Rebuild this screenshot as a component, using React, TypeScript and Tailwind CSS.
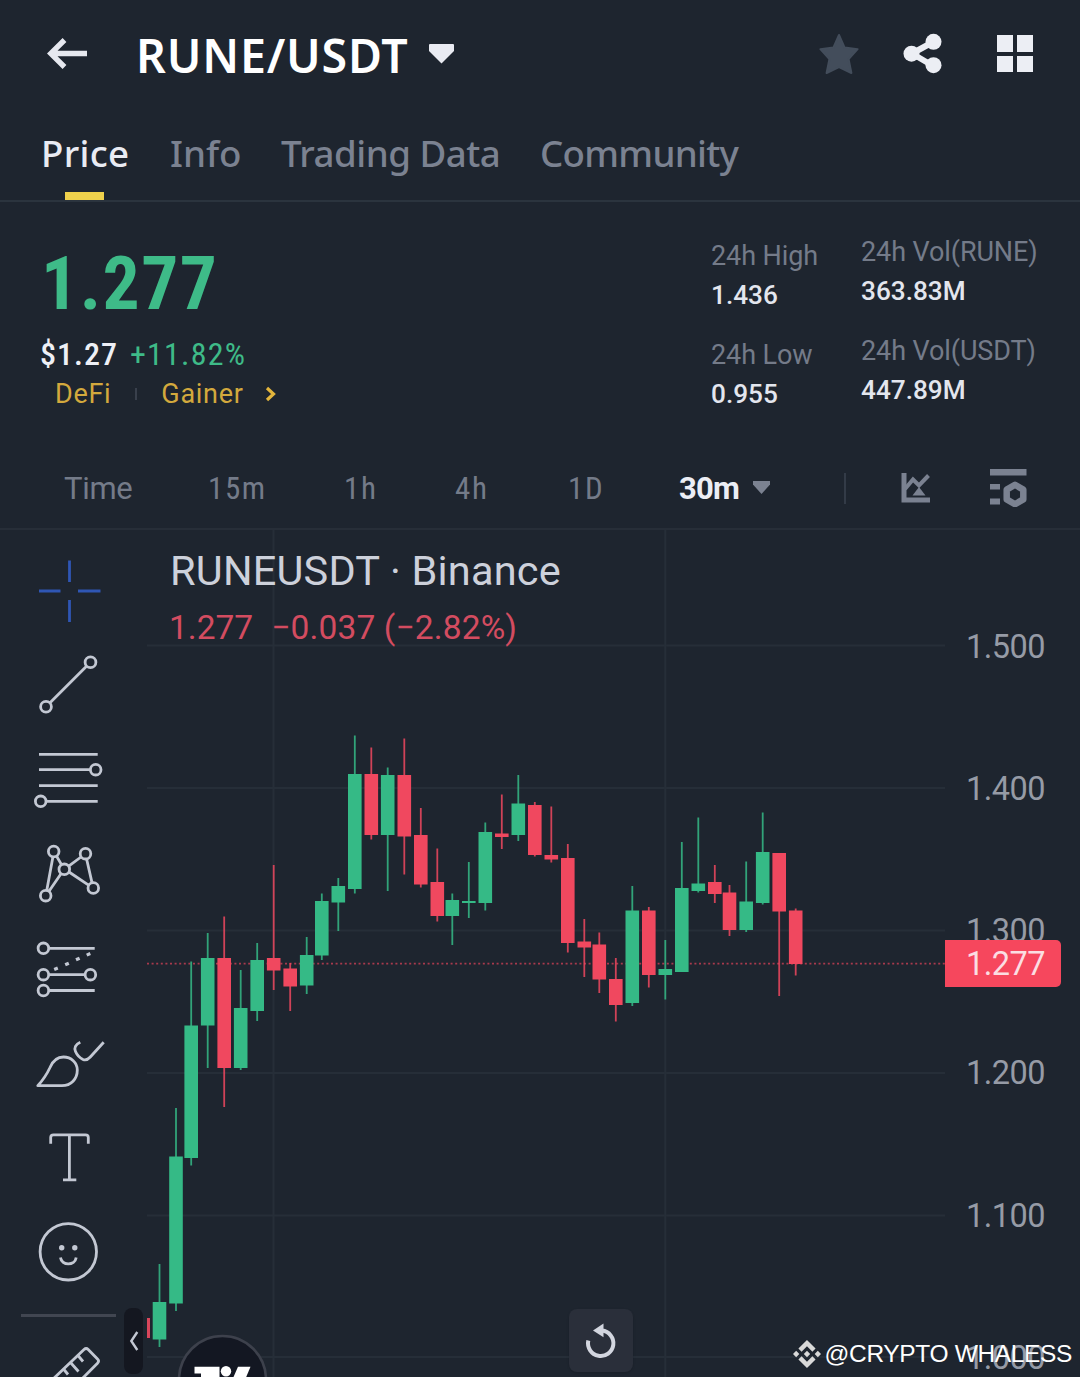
import { useState } from "react";
import { SiBinance } from "react-icons/si";

// [x, high, bodyTop, bodyBottom, low, up]
type Candle = [number, number, number, number, number, boolean];

const candles: Candle[] = [
  [159.5, 1264, 1302, 1339.5, 1347, true],
  [176, 1108, 1156.5, 1303.5, 1311, true],
  [191.2, 961.5, 1025.5, 1158, 1165.5, true],
  [207.7, 933, 958, 1025.5, 1068, true],
  [224.2, 916.5, 958, 1068, 1107, false],
  [240.7, 970, 1008, 1068, 1070, true],
  [257.2, 943, 960, 1011, 1021, true],
  [273.7, 865, 958, 970.5, 990, false],
  [290.2, 963, 968.5, 986.5, 1011, false],
  [306.7, 937, 955, 985.5, 994, true],
  [321.8, 893.5, 901, 955.5, 960, true],
  [338.3, 878, 886, 902.5, 931, true],
  [354.8, 735.5, 774, 889, 893.5, true],
  [371.3, 747.5, 774, 835, 839.5, false],
  [387.7, 767.5, 775, 835, 891, true],
  [404.3, 738.5, 775, 836.5, 874.5, false],
  [420.8, 808, 835, 884.5, 887.5, false],
  [437.3, 848.5, 882, 916, 921.5, false],
  [452.3, 893.5, 900, 916, 945, true],
  [468.8, 862, 901, 903, 918, true],
  [485.3, 822.5, 832, 903, 910.5, true],
  [501.8, 794.5, 833.5, 837, 849, false],
  [518.3, 775, 803.5, 835, 841, true],
  [534.8, 802, 805, 855, 856.5, false],
  [551.3, 806.5, 855, 859.5, 862.5, false],
  [567.8, 844, 858, 943, 952.5, false],
  [584.3, 919, 941.5, 947.5, 977, false],
  [599.3, 932.5, 944.5, 979.5, 993, false],
  [615.8, 958, 979, 1005, 1021.5, false],
  [632.3, 886, 910.5, 1003, 1006, true],
  [648.8, 907, 910.5, 975, 987.5, false],
  [665.3, 940, 969, 975, 999.5, true],
  [681.8, 842, 888, 972, 972, true],
  [698.3, 817.5, 883.5, 891, 892.5, true],
  [714.8, 865, 882, 894, 903, false],
  [729.5, 885, 892.5, 930, 936, false],
  [746.2, 861.5, 901.5, 930, 932, true],
  [762.7, 812.5, 852, 903, 904.5, true],
  [779.2, 853, 853, 911.5, 996, false],
  [795.7, 908.5, 910.5, 964, 975.5, false],
];

const tabs = [
  { name: "Price", cls: "w-[129px] tracking-[0.3px]" },
  { name: "Info", cls: "w-[111px]" },
  { name: "Trading Data", cls: "w-[259px] tracking-[-0.5px]" },
  { name: "Community", cls: "w-[210px] tracking-[-0.7px]" },
];

const frames = ["15m", "1h", "4h", "1D"];
const axis = ["1.500", "1.400", "1.300", "1.200", "1.100", "1.000"];

function Stat({ label, value }: { label: string; value: string }) {
  return (
    <div className="whitespace-nowrap leading-[39px]">
      <div className="text-[27px] tracking-[-0.1px] text-[#747b89]">{label}</div>
      <div className="text-[26.2px] font-medium text-[#e3e6ee]">{value}</div>
    </div>
  );
}

function Tool({ children }: { children: React.ReactNode }) {
  return (
    <svg
      viewBox="0 0 80 94"
      className="ml-[30px] block h-[94px] w-20 shrink-0 fill-none stroke-[#c3c8d3] stroke-[2.8]"
    >
      {children}
    </svg>
  );
}

function Toolbar() {
  return (
    <div className="relative flex h-full w-[147px] shrink-0 flex-col pt-[14px]">
      <Tool>
        <path d="M39.5 16.5V38M39.5 56V78M9 47H30.5M48 47H70.5" stroke="#2f56b4" />
      </Tool>
      <Tool>
        <circle cx="16" cy="68.7" r="5.4" />
        <circle cx="60.5" cy="24.3" r="5.4" />
        <path d="M20 64.7L56.5 28.3" />
      </Tool>
      <Tool>
        <path d="M9 22.3H67.7M9 37.7H60M9 53.7H67.7M16.3 69.3H67.7" />
        <circle cx="65.7" cy="37.7" r="5.3" />
        <circle cx="10.7" cy="69.3" r="5.3" />
      </Tool>
      <Tool>
        <circle cx="23.7" cy="25.5" r="5.3" />
        <circle cx="55.5" cy="27.7" r="5.3" />
        <circle cx="34.3" cy="43.3" r="5.3" />
        <circle cx="63.3" cy="62" r="5.3" />
        <circle cx="15.7" cy="69.7" r="5.3" />
        <path d="M22.9 31L16.8 64.3M26.6 30.2L31.5 38.6M38.7 40.2L51 31M56.6 33L62 56.6M39 46L58.6 59.2M31 47.8L19 65.2" />
      </Tool>
      <Tool>
        <circle cx="13.4" cy="28.3" r="5.3" />
        <circle cx="13.4" cy="54.7" r="5.3" />
        <circle cx="60.4" cy="54.7" r="5.3" />
        <circle cx="13.4" cy="70.5" r="5.3" />
        <path d="M19 28.3H64.7M19 54.7H55M19 70.5H64.7" />
        <path d="M24.2 49.4L27.8 47.9M35.2 44.8L38.8 43.2M46 39.8L49.6 38.2M56.7 35.1L60.3 33.5" strokeWidth="3.2" />
      </Tool>
      <Tool>
        <path
          strokeLinejoin="round"
          d="M7.8 71.7C13 66 17 60 20 53.5C23 46.5 27 43 33.5 43C41 43 47.3 48.5 47.3 56C47.3 65 41 71.7 32 71.7Z"
        />
        <path d="M50.3 28.3C45.5 30.5 43.8 34 45.5 37.5C47 41 50 44 53 45.5C55.5 46.5 58 45.5 60.3 43L73.7 28.3" />
      </Tool>
      <Tool>
        <path d="M20.7 35.8V29.5C20.7 27.5 21.5 26.8 23.5 26.8H55.5C57.5 26.8 58.3 27.5 58.3 29.5V35.8M39.4 26.8V71.8M33 71.8H46.3" />
      </Tool>
      <Tool>
        <circle cx="38.3" cy="49.8" r="28.2" />
        <circle cx="31.7" cy="45.7" r="2.7" className="fill-[#c3c8d3] stroke-none" />
        <circle cx="44.8" cy="45.7" r="2.7" className="fill-[#c3c8d3] stroke-none" />
        <path d="M30.5 55.5C31.5 64 45 64 46.2 55.5" />
      </Tool>
      <div className="ml-[21px] mt-[18px] h-[2.5px] w-[95px] shrink-0 bg-[#414651]" />
      <svg viewBox="0 0 80 60" className="ml-[30px] block h-[60px] w-20 shrink-0 fill-none stroke-[#c3c8d3] stroke-[2.8]">
        <path strokeLinejoin="round" d="M10 74.5L54 32.5C55.3 31.3 57 31.3 58.2 32.5L67.5 42C68.7 43.2 68.7 45 67.5 46.2L40 74" />
        <path d="M48 38.5L53 44.5M40.5 45.5L48.5 54.5M33.5 52L38 57.5" />
      </svg>

      {/* Collapse handle */}
      <div className="absolute bottom-[3px] left-[124px] flex h-[66px] w-[19px] items-center justify-center rounded-lg bg-[#141720]">
        <svg viewBox="0 0 10 22" className="h-[22px] w-[10px] fill-none stroke-[#c3c8d3] stroke-[2.4]">
          <path d="M8.3 2L2.3 11L8.3 20" />
        </svg>
      </div>
    </div>
  );
}

function Chart() {
  return (
    <div className="relative h-full w-[798px] shrink-0">
      <svg viewBox="147 530 798 847" className="block h-full w-full">
        <g stroke="#262e38" strokeWidth="2">
          {[645.5, 788, 930.5, 1073, 1215.5, 1357].map((y) => (
            <line key={y} x1="147" x2="945" y1={y} y2={y} />
          ))}
          <line x1="273.5" x2="273.5" y1="530" y2="1377" />
          <line x1="665.3" x2="665.3" y1="530" y2="1377" />
        </g>
        <line x1="147" x2="945" y1="963.7" y2="963.7" stroke="#a83a4d" strokeWidth="1.7" strokeDasharray="2 2.6" />
        <rect x="147" y="1318" width="3" height="20" fill="#d8465b" />
        {candles.map(([x, high, top, bottom, low, up]) => (
          <g key={x} fill={up ? "#35ba86" : "#f0485f"}>
            <rect x={x - 0.9} y={high} width="1.8" height={low - high} opacity="0.85" />
            <rect x={x - 6.8} y={top} width="13.6" height={bottom - top} />
          </g>
        ))}
      </svg>

      <div className="absolute left-[23px] top-[16px] whitespace-nowrap">
        <div className="text-[41.5px] leading-[50px] tracking-[0.2px] text-[#cdd1db]">RUNEUSDT · Binance</div>
        <div className="mt-[7px] flex gap-[18px] text-[33.5px] leading-[50px] text-[#d34c60]">
          <span className="-ml-px">1.277</span>
          <span className="tracking-[0.15px]">−0.037 (−2.82%)</span>
        </div>
      </div>

      <svg viewBox="0 0 92 44" className="absolute bottom-0 left-[30px] h-[44px] w-[92px]">
        <circle cx="45.5" cy="46.5" r="43.5" fill="#131722" stroke="#3d414c" strokeWidth="2.6" />
        <path d="M17.5 33.7H42.5V44H24V40.5H17.5Z" fill="#fff" />
        <circle cx="49" cy="38.3" r="5.2" fill="#fff" />
        <path d="M61 33.7H73.5L69.2 44H56.5Z" fill="#fff" />
      </svg>

      <button className="absolute bottom-[5px] left-[422px] flex h-[63px] w-[64px] items-center justify-center rounded-lg bg-[#2a2f3a] shadow">
        <svg viewBox="0 0 32 36" className="h-9 w-8 fill-none stroke-[#d3d6df] stroke-[4]">
          <path d="M3.3 17.5A12.7 12.7 0 1 0 17 7.6" />
          <path d="M18.5 0.4V14.2L8 7.4Z" className="fill-[#d3d6df] stroke-none" />
        </svg>
      </button>
    </div>
  );
}

export default function App() {
  const [tab, setTab] = useState("Price");

  return (
    <div className="relative h-[1377px] w-[1080px] overflow-hidden bg-[#1e252f] font-['Roboto',sans-serif]">
      <header className="flex h-[107px] items-center pl-[47px] pr-[47px]">
        <svg viewBox="0 0 40 34" className="h-[34px] w-10 shrink-0 fill-none stroke-[#e6e8ef] stroke-[5.4]">
          <path d="M17.5 3L3.8 16.5L17.5 30M4 16.5H40" />
        </svg>
        <h1 className="ml-[46px] w-[296px] whitespace-nowrap pl-[3px] pt-[2px] font-['Noto_Sans',sans-serif] text-[46.5px] font-semibold leading-[60px] tracking-[0.8px] text-white">
          RUNE/USDT
        </h1>
        <svg viewBox="0 0 25 20" className="h-5 w-[25px] shrink-0 fill-[#e9ebf2]">
          <path d="M1 0H24Q25 0 25 1V7L12.5 19.5L0 7V1Q0 0 1 0Z" />
        </svg>
        <div className="ml-auto flex items-center">
          <svg viewBox="0 0 40 42" className="h-[42px] w-10 fill-[#434d5b] stroke-[#434d5b] stroke-2" strokeLinejoin="round">
            <path d="M20 2L25.6 14.6L38.6 16.2L29.6 26.2L32.4 40L20 34.2L7.6 40L10.4 26.2L1.4 16.2L14.4 14.6Z" />
          </svg>
          <svg viewBox="0 0 40 42" className="ml-11 h-[42px] w-10 fill-[#eceef4] stroke-[#eceef4]">
            <path d="M9 20.5L31 8.5M9 20.5L31 33.5" className="stroke-[6]" />
            <circle cx="8.5" cy="20.7" r="8" stroke="none" />
            <circle cx="30.5" cy="8.8" r="8" stroke="none" />
            <circle cx="30.5" cy="32.2" r="8" stroke="none" />
          </svg>
          <div className="ml-[54px] grid grid-cols-2 gap-[4px]">
            <i className="h-[16.5px] w-4 bg-[#eceef4]" />
            <i className="h-[16.5px] w-4 bg-[#eceef4]" />
            <i className="h-[16.5px] w-4 bg-[#eceef4]" />
            <i className="h-[16.5px] w-4 bg-[#eceef4]" />
          </div>
        </div>
      </header>

      <nav className="flex h-[95px] border-b-2 border-[#2b343e] pl-[41px] font-['Noto_Sans',sans-serif]">
        {tabs.map((t) => (
          <button key={t.name} onClick={() => setTab(t.name)} className={`${t.cls} flex shrink-0 flex-col justify-start whitespace-nowrap text-left`}>
            <div
              className={
                tab === t.name
                  ? "h-[85px] text-[36.7px] font-medium leading-[92px] text-[#e9ebf3]"
                  : "h-[85px] text-[36.7px] font-medium leading-[92px] text-[#7b8291]"
              }
            >
              {t.name}
            </div>
            {tab === t.name && <div className="ml-[24px] h-2 w-[39px] bg-[#efd14c]" />}
          </button>
        ))}
      </nav>

      <section className="flex h-[246px]">
        <div className="w-[711px] pl-10 pt-[46px]">
          <div className="pl-px text-[73.5px] font-bold leading-[72px] tracking-[1.5px] text-[#3ebb88] [font-stretch:80%]">
            1.277
          </div>
          <div className="mt-[16px] flex gap-[12px] text-[32px] leading-[36px] [font-stretch:80%]">
            <span className="font-medium tracking-[1px] text-[#eef0f6]">$1.27</span>
            <span className="tracking-[1.2px] text-[#3ebb88]">+11.82%</span>
          </div>
          <div className="mt-[4px] flex items-center text-[27px] leading-[36px] tracking-[0.7px] text-[#d3a93d]">
            <span className="ml-[15px]">DeFi</span>
            <span className="ml-6 h-3 w-[2px] bg-[#39404c]" />
            <span className="ml-[24px]">Gainer</span>
            <svg viewBox="0 0 12 16" className="ml-[21px] h-4 w-3 fill-none stroke-[#e3b53c] stroke-[3.2]">
              <path d="M2 2L8.5 8L2 14" />
            </svg>
          </div>
        </div>
        <div className="flex w-[150px] flex-col gap-[21px] pt-[35px]">
          <Stat label="24h High" value="1.436" />
          <Stat label="24h Low" value="0.955" />
        </div>
        <div className="flex flex-col gap-[21px] pt-[31px]">
          <Stat label="24h Vol(RUNE)" value="363.83M" />
          <Stat label="24h Vol(USDT)" value="447.89M" />
        </div>
      </section>

      <div className="grid h-[82px] grid-cols-[144px_136px_111px_113px_111px_165px_57px_89px_1fr] items-center border-b-2 border-[#272e38] pl-[64px] text-[31px] text-[#747b89]">
        <span className="pt-[2px] tracking-[-0.3px]">Time</span>
        {frames.map((f) => (
          <span key={f} className="pt-[2px] tracking-[1.6px] [font-stretch:80%]">{f}</span>
        ))}
        <span className="flex items-center pt-[2px] font-bold tracking-[-0.8px] text-[#eceef5]">
          30m
          <svg viewBox="0 0 17 14" className="ml-[14px] mb-[3px] h-[14px] w-[17px] fill-[#7b8291]">
            <path d="M0 0H17V3.5L8.5 13L0 3.5Z" />
          </svg>
        </span>
        <span className="h-[31px] w-[2px] bg-[#333b47]" />
        <svg viewBox="0 0 30 30" className="h-[30px] w-[30px] fill-none stroke-[#7b8291]">
          <path d="M3 0V27H29" className="stroke-[5]" />
          <path d="M4 16L12 6.5L18 12.5L27.5 2.5" className="stroke-[4]" />
          <path d="M18 14L24.5 22.5H11.5Z" className="fill-[#7b8291] stroke-none" />
        </svg>
        <svg viewBox="0 0 37 38" className="h-[38px] w-[37px] fill-[#7b8291]">
          <path d="M0 0H36.5V6.5H0ZM0 15H10V20.5H0ZM0 29.5H10V35.5H0Z" />
          <path d="M25 15.8L33.3 20.6V30.4L25 35.2L16.7 30.4V20.6Z" fill="none" stroke="#7b8291" strokeWidth="6.5" strokeLinejoin="round" />
        </svg>
      </div>

      <main className="flex h-[847px]">
        <Toolbar />
        <Chart />
        <div className="relative w-[135px] pt-[45.5px]">
          {axis.map((p) => (
            <div key={p} className="h-[142.3px] pl-[21px] text-[32.5px] leading-[142.3px] tracking-[-0.5px] text-[#969ba6]">
              {p}
            </div>
          ))}
          <div className="absolute left-0 top-[410px] h-[47px] w-[115.5px] rounded-r-[5px] bg-[#f6475d] pl-[21px] text-[32.5px] leading-[49px] tracking-[-0.5px] text-[#fbdde2]">
            1.277
          </div>
        </div>
      </main>

      {/* Author mark over the chart */}
      <div className="absolute bottom-[8px] right-[8px] flex items-center gap-[4px]">
        <SiBinance className="h-7 w-7 text-[#d9d9d9]" />
        <span className="whitespace-nowrap font-['Liberation_Sans',sans-serif] text-[24.5px] leading-[30px] tracking-[-0.35px] text-white">
          @CRYPTO WHALESS
        </span>
      </div>
    </div>
  );
}
